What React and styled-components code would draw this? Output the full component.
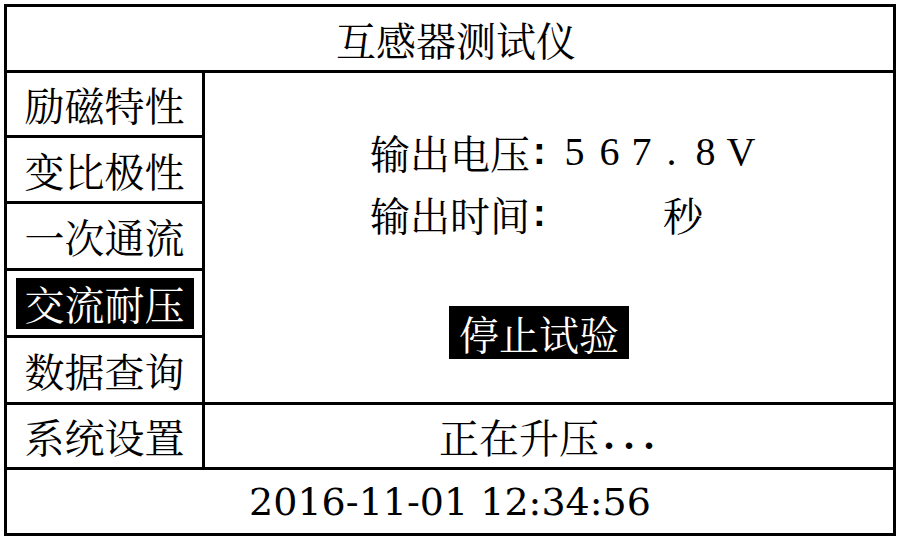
import React from "react";
import styled, { createGlobalStyle } from "styled-components";

const CJK = `"Noto Serif CJK SC", "Noto Sans CJK SC", "Noto Sans CJK JP", sans-serif`;

const Global = createGlobalStyle`
  html, body { margin: 0; padding: 0; background: #fff; }
  body { font-family: ${CJK}; color: #000; }
`;

const Frame = styled.div`
  box-sizing: border-box;
  margin: 4px 0 0 4px;
  width: 892px;
  height: 532px;
  border: 3px solid #000;
  background: #000;
  display: grid;
  grid-template-columns: 195px 688px;
  grid-template-rows: 63px 62px 63px 64px 64px 64px 62px 63px;
  gap: 3px;
`;

const Header = styled.div`
  grid-column: 1 / 3;
  background: #fff;
  display: flex;
  align-items: center;
  justify-content: center;
  padding-left: 12px;
  font-size: 40px;
  line-height: 1;
`;

const NavItem = styled.div`
  grid-column: 1;
  background: #fff;
  display: flex;
  align-items: center;
  justify-content: center;
  font-size: 40px;
  line-height: 1;
`;

const NavLabel = styled.span`
  display: inline-flex;
  align-items: center;
  justify-content: center;
  height: 51px;
  padding: 0 9px;
  background: ${(p) => (p.$active ? "#000" : "transparent")};
  color: ${(p) => (p.$active ? "#fff" : "#000")};
`;

const Main = styled.div`
  grid-column: 2;
  grid-row: 2 / 7;
  background: #fff;
  display: flex;
  flex-direction: column;
  align-items: flex-start;
  padding: 47px 0 0 165px;
  font-size: 40px;
`;

const Line = styled.div`
  display: flex;
  align-items: center;
  height: 62px;
  white-space: nowrap;
`;

const Colon = styled.span`
  display: inline-block;
  box-sizing: border-box;
  width: 27px;
  padding-left: 3px;
  font-family: "Liberation Sans", sans-serif;
  font-weight: bold;
  font-size: 38px;
`;

const Digit = styled.span`
  display: inline-block;
  text-align: center;
  font-family: "Liberation Serif", serif;
  font-size: 40px;
`;

const Gap = styled.span`
  display: inline-block;
  width: ${(p) => p.$w}px;
`;

const StopButton = styled.button`
  margin: 62px 0 0 79px;
  height: 53px;
  padding: 0 10px;
  border: none;
  background: #000;
  color: #fff;
  font-family: ${CJK};
  font-size: 40px;
  line-height: 1;
  display: flex;
  align-items: center;
`;

const Status = styled.div`
  grid-column: 2;
  grid-row: 7;
  background: #fff;
  display: flex;
  align-items: center;
  justify-content: center;
  font-size: 40px;
  line-height: 1;
`;

const Dot = styled.span`
  display: inline-block;
  width: 20px;
  text-align: center;
  font-family: "Liberation Serif", serif;
  font-weight: bold;
`;

const Footer = styled.div`
  grid-column: 1 / 3;
  grid-row: 8;
  background: #fff;
  display: flex;
  align-items: center;
  justify-content: center;
  font-family: "DejaVu Serif", "Liberation Serif", serif;
  font-size: 38px;
  line-height: 1;
`;

const navItems = ["励磁特性", "变比极性", "一次通流", "交流耐压", "数据查询", "系统设置"];
const activeIndex = 3;
const voltage = [
  ["5", 35],
  ["6", 35],
  ["7", 29],
  [".", 31],
  ["8", 37],
  ["V", 34],
];

export default function App() {
  return (
    <>
      <Global />
      <Frame>
        <Header>互感器测试仪</Header>
        {navItems.map((t, i) => (
          <NavItem key={t} style={{ gridRow: i + 2 }}>
            <NavLabel $active={i === activeIndex}>{t}</NavLabel>
          </NavItem>
        ))}
        <Main>
          <Line>
            <span>输出电压</span>
            <Colon>:</Colon>
            {voltage.map(([c, w], i) => (
              <Digit key={i} style={{ width: w }}>
                {c}
              </Digit>
            ))}
          </Line>
          <Line>
            <span>输出时间</span>
            <Colon>:</Colon>
            <Gap $w={106} />
            <span>秒</span>
          </Line>
          <StopButton type="button">停止试验</StopButton>
        </Main>
        <Status>
          <span>正在升压</span>
          <Dot>.</Dot>
          <Dot>.</Dot>
          <Dot>.</Dot>
        </Status>
        <Footer>2016-11-01 12:34:56</Footer>
      </Frame>
    </>
  );
}
